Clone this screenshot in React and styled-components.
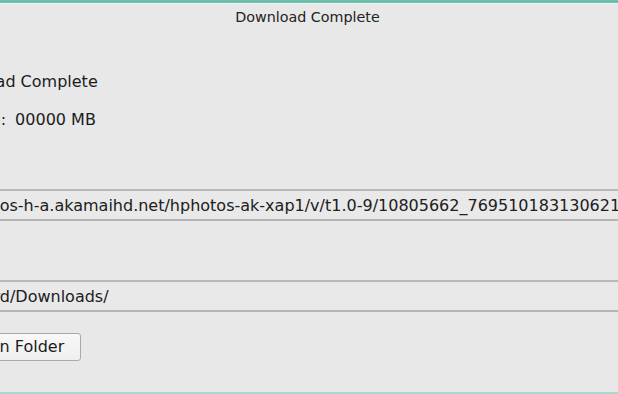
import React from "react";
import styled, { createGlobalStyle } from "styled-components";

const Global = createGlobalStyle`
  html, body { margin: 0; padding: 0; background: #e8e8e8; overflow: hidden; }
  body { font-family: "DejaVu Sans", "Liberation Sans", sans-serif; }
  * { box-sizing: border-box; }
`;

const Page = styled.div`
  width: 618px;
  height: 394px;
  background: #e8e8e8;
  border-top: 3px solid #6cbfad;
  border-bottom: 2px solid #a3dacd;
  box-shadow: inset 0 1px 0 #f3f3f3;
  overflow: hidden;
  display: flex;
  flex-direction: column;
`;

const TitleBar = styled.div`
  padding-top: 6px;
  padding-right: 3px;
  text-align: center;
  font-size: 14.3px;
  line-height: 16px;
  color: #222;
`;

const Body = styled.div`
  margin-left: -64px;
  width: 760px;
  display: flex;
  flex-direction: column;
  align-items: flex-start;
  color: #1c1c1c;
  font-size: 16px;
  line-height: 20px;
`;

const Status = styled.div`
  margin-top: 47px;
  display: flex;
  flex-direction: column;
  gap: 18px;
`;

const Line = styled.div`
  white-space: nowrap;
`;

const Value = styled.span`
  margin-left: 9px;
`;

const Field = styled.div`
  align-self: stretch;
  margin-top: ${(p) => p.$top}px;
  height: 32px;
  padding: 5px 4px 3px ${(p) => p.$inset}px;
  border-top: 2px solid #b9b9b9;
  border-bottom: 2px solid #b4b4b4;
  background: #e9e9e9;
  white-space: nowrap;
  overflow: hidden;
  color: #202020;
`;

const Button = styled.button`
  margin-top: 21px;
  margin-left: 14px;
  height: 28px;
  padding: 3px 16px;
  border: 1px solid #a9a9a9;
  border-radius: 3px;
  background: linear-gradient(#f8f8f8, #efefef);
  font-family: "DejaVu Sans", sans-serif;
  font-size: 16px;
  line-height: 20px;
  color: #1c1c1c;
`;

export default function App() {
  return (
    <>
      <Global />
      <Page>
        <TitleBar>Download Complete</TitleBar>
        <Body>
          <Status>
            <Line>Download Complete</Line>
            <Line>
              File Size:<Value>00000 MB</Value>
            </Line>
          </Status>
          <Field $top={59} $inset={19}>
            sphotos-h-a.akamaihd.net/hphotos-ak-xap1/v/t1.0-9/10805662_769510183130621_4727453498912345678_n.jpg
          </Field>
          <Field $top={59} $inset={15}>
            /sdcard/Downloads/
          </Field>
          <Button>Open Folder</Button>
        </Body>
      </Page>
    </>
  );
}
